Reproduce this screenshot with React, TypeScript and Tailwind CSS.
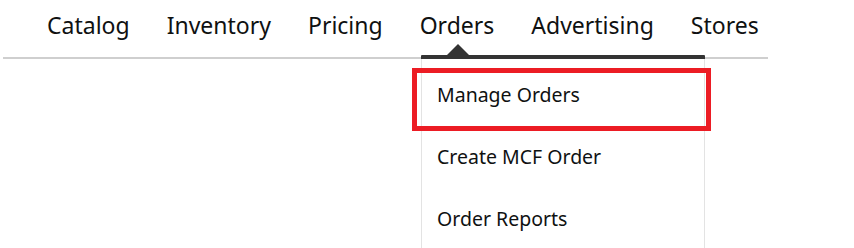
import React from 'react'

const navItems = ['Catalog', 'Inventory', 'Pricing', 'Orders', 'Advertising', 'Stores']
const menuItems = ['Manage Orders', 'Create MCF Order', 'Order Reports']

export default function App() {
  return (
    <div
      className="relative w-[854px] h-[248px] overflow-hidden bg-white text-[#0f1111]"
      style={{ fontFamily: '"Noto Sans", "Open Sans", sans-serif' }}
    >
      {/* Top navigation */}
      <div className="ml-[3px] w-[765px] h-[59px] border-b-2 border-[#cfcfcf]">
        <div className="flex items-start gap-[37px] pl-[44px] pt-[10px] text-[23px] leading-[30px]">
          {navItems.map((item) => (
            <span key={item}>{item}</span>
          ))}
        </div>
      </div>

      {/* Orders dropdown */}
      <div className="absolute left-[421px] top-[55px] w-[284px] h-[200px]">
        {/* caret */}
        <div className="absolute left-[26px] -top-[11px] w-0 h-0 border-l-[11px] border-r-[11px] border-b-[11px] border-l-transparent border-r-transparent border-b-[#333]" />
        <div className="h-full border-t-4 border-[#333] rounded-t-[1px]">
          <div className="h-full bg-white border-l border-r border-[#e3e3e3]">
            <ul className="pl-[15px] pt-[22px] text-[19.5px] leading-[28px]">
              {menuItems.map((item) => (
                <li key={item} className="h-[62px]">
                  {item}
                </li>
              ))}
            </ul>
          </div>
        </div>
      </div>

      {/* Highlight annotation */}
      <div className="absolute left-[412px] top-[68px] w-[299px] h-[63px] border-[5px] border-[#ec1c24]" />
    </div>
  )
}
